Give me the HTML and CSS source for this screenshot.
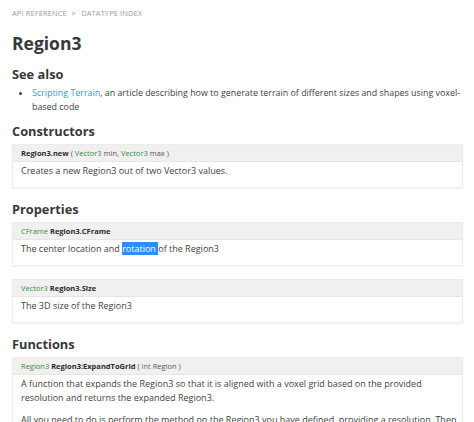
FILE: index.html
```html
<!DOCTYPE html>
<html>
<head>
<meta charset="utf-8">
<link rel="stylesheet" href="styles.css">
</head>
<body>
<div class="page">
  <nav class="crumbs"><span>API REFERENCE</span><span class="sep">&gt;</span><span>DATATYPE INDEX</span></nav>
  <h1 class="title">Region3</h1>

  <h2 class="section">See also</h2>
  <ul class="links">
    <li><a class="link">Scripting Terrain</a>, an article describing how to generate terrain of different sizes and shapes using voxel-based code</li>
  </ul>

  <h2 class="section">Constructors</h2>
  <div class="member">
    <div class="member-head"><b>Region3.new</b> ( <span class="type">Vector3</span> min, <span class="type">Vector3</span> max )</div>
    <div class="member-body"><p>Creates a new Region3 out of two Vector3 values.</p></div>
  </div>

  <h2 class="section">Properties</h2>
  <div class="member">
    <div class="member-head"><span class="type">CFrame</span> <b>Region3.CFrame</b></div>
    <div class="member-body"><p>The center location and <span class="sel">rotation </span>of the Region3</p></div>
  </div>
  <div class="member">
    <div class="member-head"><span class="type">Vector3</span> <b>Region3.Size</b></div>
    <div class="member-body"><p>The 3D size of the Region3</p></div>
  </div>

  <h2 class="section">Functions</h2>
  <div class="member">
    <div class="member-head"><span class="type">Region3</span> <b>Region3:ExpandToGrid</b> ( <span class="type">int</span> Region )</div>
    <div class="member-body">
      <p>A function that expands the Region3 so that it is aligned with a voxel grid based on the provided resolution and returns the expanded Region3.</p>
      <p>All you need to do is perform the method on the Region3 you have defined, providing a resolution. Then the function will return the expanded Region3.</p>
    </div>
  </div>
</div>
</body>
</html>
```
FILE: styles.css
```css
html, body {
  margin: 0;
  padding: 0;
  background: #ffffff;
}
body {
  font-family: "Open Sans", "Liberation Sans", sans-serif;
  color: #3d3f41;
  font-size: 9px;
}
.page {
  padding: 6px 11px 0 12px;
}
.crumbs {
  display: flex;
  gap: 5px;
  font-size: 7.5px;
  color: #9a9a9a;
  line-height: 14px;
  letter-spacing: 0.1px;
}
.title {
  margin: 12px 0 12px;
  font-size: 17.5px;
  line-height: 22px;
  font-weight: 700;
  color: #36383a;
}
.section {
  margin: 9px 0 5px;
  font-size: 12.8px;
  line-height: 16px;
  font-weight: 700;
  color: #36383a;
}
.links {
  margin: -1px 0 9px;
  padding-left: 20px;
  line-height: 14px;
  font-size: 8.9px;
}
.link {
  color: #1aa0f0;
}
.member {
  border: 1px solid #ececec;
  box-shadow: 0 1px 2px rgba(0,0,0,0.05);
  margin-bottom: 13px;
}
.member-head {
  background: #f0f0f0;
  border-bottom: 1px solid #e6e6e6;
  padding: 3px 8px 3px;
  font-size: 7.5px;
  line-height: 10px;
  color: #555;
}
.member-head b {
  color: #2b2b2b;
  font-weight: 700;
}
.type {
  color: #3c8a3c;
}
.member-body {
  padding: 2px 3px 1px 8px;
  background: #fff;
}
.member-body p {
  margin: 0 0 8px;
  line-height: 14px;
  font-size: 9px;
}
.sel {
  background: #2f8cff;
  color: #fff;
}
```
